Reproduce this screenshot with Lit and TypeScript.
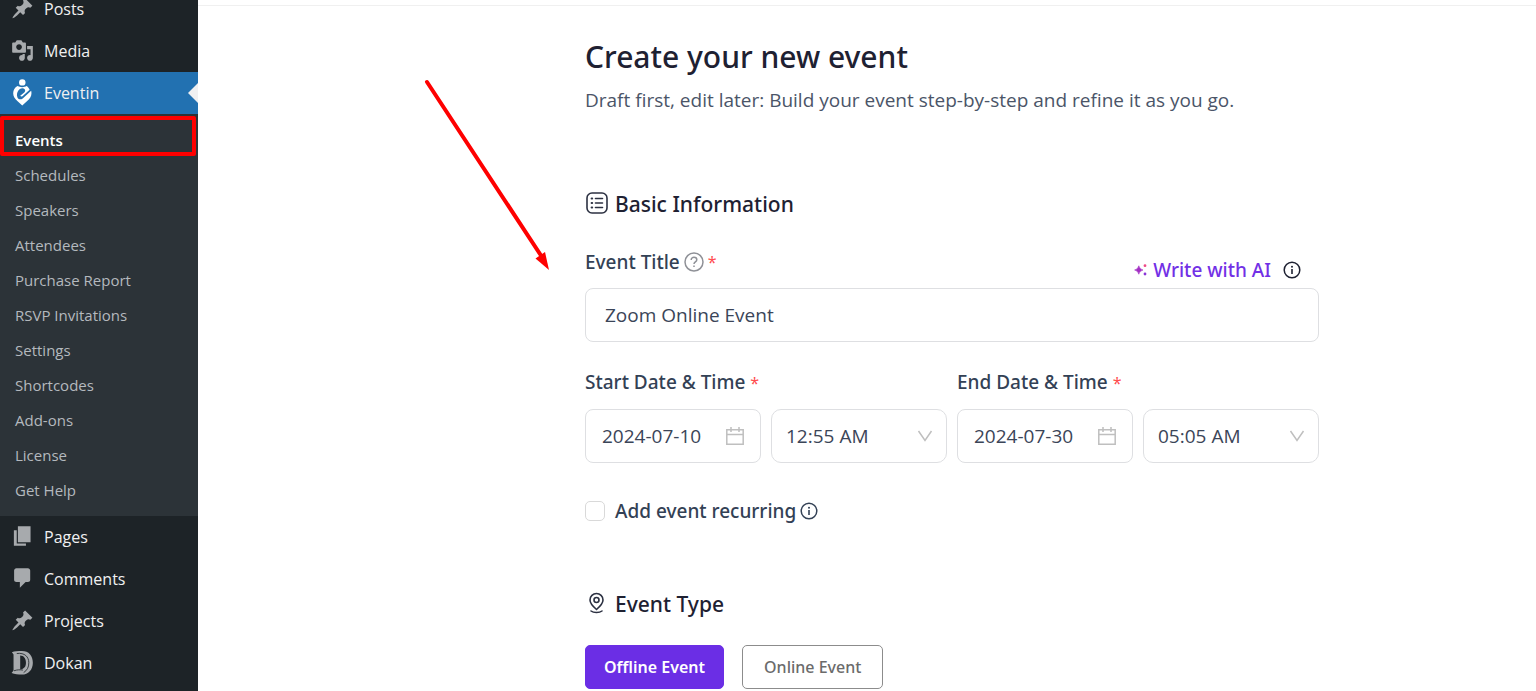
import { LitElement, html, css, svg, TemplateResult } from "lit";
import { customElement, property, state } from "lit/decorators.js";
import { classMap } from "lit/directives/class-map.js";

const icons: Record<string, TemplateResult> = {
  pin: svg`<path d="M10.44 3.02l1.82-1.82 6.36 6.35-1.83 1.82c-1.05-.68-2.48-.57-3.41.36l-.75.75c-.92.93-1.04 2.35-.35 3.41l-1.83 1.82-2.41-2.41-2.8 2.79c-.42.42-3.38 2.71-3.8 2.29s1.86-3.39 2.28-3.81l2.79-2.79L4.1 9.36l1.83-1.82c1.05.69 2.48.57 3.4-.36l.75-.75c.93-.92 1.05-2.35.36-3.41z"/>`,
  media: svg`<path d="M13 11V4c0-.55-.45-1-1-1h-1.67L9 1H5L3.67 3H2c-.55 0-1 .45-1 1v7c0 .55.45 1 1 1h10c.55 0 1-.45 1-1zM7 4.500c1.380 0 2.500 1.120 2.500 2.500S8.380 9.500 7 9.500 4.500 8.380 4.500 7 5.620 4.500 7 4.500zM14 6h5v10.500c0 1.380-1.120 2.500-2.500 2.500S14 17.880 14 16.500s1.120-2.500 2.500-2.500c.170 0 .340.020.500.050V9h-3V6zM10 14.050V13h2v3.500c0 1.380-1.120 2.500-2.500 2.500S7 17.880 7 16.500 8.120 14 9.500 14c.170 0 .340.020.500.050z" fill-rule="evenodd"/>`,
  eventin: svg`<circle cx="9.800" cy="1.200" r="2.800"/><path d="M5.600 4.400C3.300 5.700 1.900 8 1.900 10.600c0 2.700 1.500 4.900 3.600 6.700L9.800 21.200l4.500-4.100c2-1.700 3.500-3.700 3.500-6.500 0-.8-.1-1.500-.3-2.100L10.200 15.200c-1.700 1.300-3.800.8-4.600-.9-1-2.300-.3-5.700 2.100-7.300 1.500-1 3.300-.9 4.200.1.900 1.100.3 2.500-.9 3.400l-3 2.300c.5.800 1.300.9 2.200.2l6-5.300c-.5-1.400-1.400-2.500-2.600-3.300-2 1.200-5.500 1.300-8 0z"/>`,
  pages: svg`<path d="M6 15V1h11v14H6zm-1 1h8v2H2.500V4.500H5V16z"/>`,
  comments: svg`<path d="M4.700 1h10c1.100 0 2 .9 2 2v8c0 1.100-.9 2-2 2h-2l-5 5v-5h-3c-1.100 0-2-.9-2-2V3c0-1.100.9-2 2-2z"/>`,
  dokan: svg`<path fill-rule="evenodd" d="M.8 1C3 .2 6 0 9.500 0 15.500 0 19 4 19 10.200S15 20.500 9.500 20.500c-3 0-6.500 0-9-1.300L2.200 17V3zM8 4v12c3.600-.5 5-2.500 5-5.800C13 6.400 11 4 8 4z"/><path d="M5 2.200c7-1 10.500 3 10.500 8 0 4-1.500 6.600-4.500 8.600M2.600 17.200c3-1 5-1 7.800-.6" fill="none" stroke="#1d2327" stroke-width=".7"/>`,
};

const info = html`<svg class="info" viewBox="0 0 18 18" aria-hidden="true">
  <circle cx="9" cy="9" r="7.800" fill="none" stroke="currentColor" stroke-width="1.500" />
  <circle cx="9" cy="5.700" r="1" fill="currentColor" />
  <path d="M9 8v5" stroke="currentColor" stroke-width="1.600" />
</svg>`;

@customElement("admin-menu")
class AdminMenu extends LitElement {
  private subItems = [
    "Events", "Schedules", "Speakers", "Attendees", "Purchase Report", "RSVP Invitations",
    "Settings", "Shortcodes", "Add-ons", "License", "Get Help",
  ];

  static styles = css`
    :host { display: block; background: #1d2327; overflow: hidden; font-family: "Open Sans", "Noto Sans", sans-serif; }
    ul { list-style: none; margin: 0; padding: 0; }
    a { color: #f0f0f1; text-decoration: none; }
    .menu { margin-top: -12px; }
    .top { display: flex; align-items: center; gap: 10px; height: 42px; padding-left: 11px; font-size: 16px; line-height: 18px; }
    .top svg { width: 23px; height: 23px; margin-bottom: 2px; flex: none; fill: #a7aaad; overflow: visible; }
    .current { background: #2271b1; position: relative; }
    .current svg { fill: #fff; }
    .current::after {
      content: ""; position: absolute; right: 0; top: 11px;
      border: 10px solid transparent; border-left-width: 0; border-right-color: #f0f0f1;
    }
    .sub { position: relative; background: #2c3338; padding: 8px 0 9px; }
    .sub a { display: flex; align-items: center; height: 35px; padding-left: 15px; font-size: 15px; color: #b4b9be; }
    .sub a.active { color: #fff; font-weight: 600; }
    .marker { position: absolute; inset: 2px 2px auto 0; height: 40px; box-sizing: border-box; border: 4px solid #fe0000; border-radius: 2px; pointer-events: none; }
  `;

  private entry(icon: string, label: string, current = false) {
    return html`<a href="#" class=${classMap({ top: true, current })}>
      <svg viewBox="0 0 20 20" aria-hidden="true">${icons[icon]}</svg><span>${label}</span>
    </a>`;
  }

  render() {
    return html`<nav aria-label="Admin menu">
      <ul class="menu">
        <li>${this.entry("pin", "Posts")}</li>
        <li>${this.entry("media", "Media")}</li>
        <li>
          ${this.entry("eventin", "Eventin", true)}
          <ul class="sub">
            ${this.subItems.map((t, i) => html`<li><a href="#" class=${classMap({ active: i === 0 })}>${t}</a></li>`)}
            <li class="marker" aria-hidden="true"></li>
          </ul>
        </li>
        <li>${this.entry("pages", "Pages")}</li>
        <li>${this.entry("comments", "Comments")}</li>
        <li>${this.entry("pin", "Projects")}</li>
        <li>${this.entry("dokan", "Dokan")}</li>
      </ul>
    </nav>`;
  }
}

@customElement("date-time-field")
class DateTimeField extends LitElement {
  @property() label = "";
  @property() date = "";
  @property() time = "";

  static styles = css`
    :host { display: block; min-width: 0; }
    .label { display: block; font-family: "Noto Sans", sans-serif; font-size: 19px; line-height: 28px; font-weight: 500; color: #334155; margin-bottom: 12px; }
    .req { color: #ff4d4f; font-size: 16px; font-weight: 400; }
    .pair { display: grid; grid-template-columns: 1fr 1fr; gap: 10px; }
    .box { display: flex; align-items: center; min-width: 0; height: 54px; box-sizing: border-box; border: 1px solid #dedfe2; border-radius: 8px; padding: 0 15px 0 16px; }
    .time { padding: 0 13px 0 14px; border-radius: 10px; }
    input, select { flex: 1; min-width: 0; width: 100%; border: 0; padding: 0; background: none; outline: 0; appearance: none; font: inherit; font-size: 19px; line-height: 28px; color: #3b4558; }
    svg { flex: none; width: 20px; height: 20px; fill: none; stroke: #bfbfbf; stroke-width: 1.500; }
    .time svg { width: 16px; height: 16px; }
  `;

  render() {
    return html`
      <label class="label" for="date">${this.label} <span class="req">*</span></label>
      <div class="pair">
        <div class="box">
          <input id="date" type="text" .value=${this.date} />
          <svg viewBox="0 0 20 20" aria-hidden="true"><path d="M1.800 3.800h16.400v14.400H1.800zM1.800 8.500h16.400M6 1v5M14 1v5" /></svg>
        </div>
        <div class="box time">
          <select aria-label="${this.label} hour"><option>${this.time}</option></select>
          <svg viewBox="0 0 16 16" aria-hidden="true"><path d="M1.500 3l6.500 9.500L14.500 3" /></svg>
        </div>
      </div>`;
  }
}

@customElement("app-root")
class AppRoot extends LitElement {
  @state() private kind = "Offline Event";

  static styles = css`
    :host {
      display: grid; grid-template-columns: 198px minmax(0, 1fr); height: 100vh; overflow: hidden;
      background: #fff; font-family: "Open Sans", "Noto Sans", sans-serif; color: #1e2132;
    }
    main { position: relative; }
    h1, h2, .title-row, .recurring, .kind { font-family: "Noto Sans", sans-serif; font-weight: 500; }
    .bar { height: 5px; border-bottom: 1px solid #f0f0f0; }
    .page { display: grid; grid-template-columns: 387fr 734fr 217fr; }
    .form { grid-column: 2; padding-top: 30px; min-width: 0; }
    h1 { margin: 0; font-size: 30px; line-height: 42px; }
    .lead { margin: 8px 0 74px; font-size: 19px; line-height: 28px; color: #4b5568; white-space: nowrap; }
    h2 { display: flex; align-items: center; gap: 6px; margin: 0; font-size: 21px; line-height: 32px; }
    h2 svg { width: 24px; height: 24px; fill: none; stroke: #2c3142; stroke-width: 1.600; stroke-linecap: round; }
    .title-row { display: flex; justify-content: space-between; height: 36px; margin: 28px 0 4px; }
    .title-row label { display: flex; align-items: center; gap: 4px; height: 28px; font-size: 19px; color: #334155; }
    .help { width: 20px; height: 20px; }
    .req { color: #ff4d4f; font-size: 16px; font-weight: 400; }
    .ai { align-self: flex-end; display: flex; align-items: center; gap: 12px; padding-right: 18px; }
    .ai button { display: flex; align-items: center; gap: 5px; border: 0; padding: 0; background: none; font: inherit; font-size: 19px; line-height: 28px; color: #7230e6; }
    .ai button svg { width: 14px; height: 14px; }
    .info { width: 18px; height: 18px; flex: none; }
    .text { display: block; width: 100%; height: 54px; box-sizing: border-box; border: 1px solid #dedfe2; border-radius: 8px; padding: 0 19px; font: inherit; font-size: 19px; color: #3b4558; outline: 0; }
    .dates { display: grid; grid-template-columns: 1fr 1fr; gap: 10px; margin: 26px 0 34px; }
    .recurring { display: flex; align-items: center; margin-bottom: 63px; color: #334155; }
    .recurring input { appearance: none; width: 20px; height: 20px; margin: 0 10px 0 0; border: 1px solid #d9d9d9; border-radius: 5px; background: #fff; }
    .recurring label { font-size: 19px; line-height: 28px; margin-right: 4px; }
    .kinds { display: flex; gap: 18px; margin-top: 25px; }
    .kind { height: 44px; box-sizing: border-box; border: 1px solid #8c8c8c; border-radius: 5px; padding: 0 21px; background: #fff; font-size: 16px; color: #6b6b6b; }
    .on { background: #6b2ee5; border-color: #6b2ee5; color: #fff; font-weight: 600; padding: 0 18px; }
    .arrow { position: absolute; left: 222px; top: 75px; width: 136px; height: 200px; pointer-events: none; }
  `;

  render() {
    return html`
      <admin-menu></admin-menu>
      <main>
        <div class="bar"></div>
        <div class="page">
          <form class="form" @submit=${(e: Event) => e.preventDefault()}>
            <h1>Create your new event</h1>
            <p class="lead">Draft first, edit later: Build your event step-by-step and refine it as you go.</p>

            <h2>
              <svg viewBox="0 0 24 24" aria-hidden="true">
                <rect x="2" y="1" width="20" height="20" rx="5" />
                <path d="M10.500 6.500h7M10.500 11h7M10.500 15.500h7" />
                <path d="M6.700 6.500h.4M6.700 11h.4M6.700 15.500h.4" stroke-width="2.200" />
              </svg>
              <span>Basic Information</span>
            </h2>
            <div class="title-row">
              <label for="title">
                <span>Event Title</span>
                <svg class="help" viewBox="0 0 20 20" fill="none" stroke="#8f9197" stroke-width="1.500" aria-hidden="true">
                  <circle cx="10" cy="10" r="9" />
                  <path d="M7.200 7.900c0-1.500 1.200-2.600 2.800-2.600s2.800 1.100 2.800 2.500c0 2.100-2.800 2.100-2.800 4.200" />
                  <path d="M10 13.400v1.600" />
                </svg>
                <span class="req">*</span>
              </label>
              <div class="ai">
                <button type="button">
                  <svg viewBox="0 0 14 14" aria-hidden="true">
                    <path d="M4.800 2.800Q5.500 6.300 9 7 5.500 7.700 4.800 11.200 4.100 7.700.6 7 4.100 6.300 4.800 2.800z" fill="#a32fc4" stroke="#a32fc4" stroke-width=".6" />
                    <circle cx="11" cy="2.700" r="1.400" fill="#f04a86" />
                    <circle cx="11" cy="11" r="1.400" fill="#8a35d8" />
                  </svg>
                  <span>Write with AI</span>
                </button>
                ${info}
              </div>
            </div>
            <input class="text" id="title" type="text" .value=${"Zoom Online Event"} />

            <div class="dates">
              <date-time-field label="Start Date &amp; Time" date="2024-07-10" time="12:55 AM"></date-time-field>
              <date-time-field label="End Date &amp; Time" date="2024-07-30" time="05:05 AM"></date-time-field>
            </div>

            <div class="recurring">
              <input type="checkbox" id="recurring" />
              <label for="recurring">Add event recurring</label>
              ${info}
            </div>

            <h2>
              <svg viewBox="0 0 24 24" aria-hidden="true">
                <path d="M11.500 17.500C8 14.500 5 11.800 5 8a6.500 6.500 0 0 1 13 0c0 3.800-3 6.500-6.500 9.500z" />
                <circle cx="11.500" cy="8" r="2.500" />
                <path d="M6 19c2.500 2 8.500 2 11 0" />
              </svg>
              <span>Event Type</span>
            </h2>
            <div class="kinds">
              ${["Offline Event", "Online Event"].map(
                (k) => html`<button type="button" class=${classMap({ kind: true, on: k === this.kind })} @click=${() => (this.kind = k)}>${k}</button>`
              )}
            </div>
          </form>
        </div>
        <svg class="arrow" viewBox="0 0 136 200" aria-hidden="true">
          <path d="M7 7L122 182" stroke="#fe0000" stroke-width="4" stroke-linecap="round" />
          <path d="M129 195L115.500 183.500L125 177z" fill="#fe0000" />
        </svg>
      </main>`;
  }
}
